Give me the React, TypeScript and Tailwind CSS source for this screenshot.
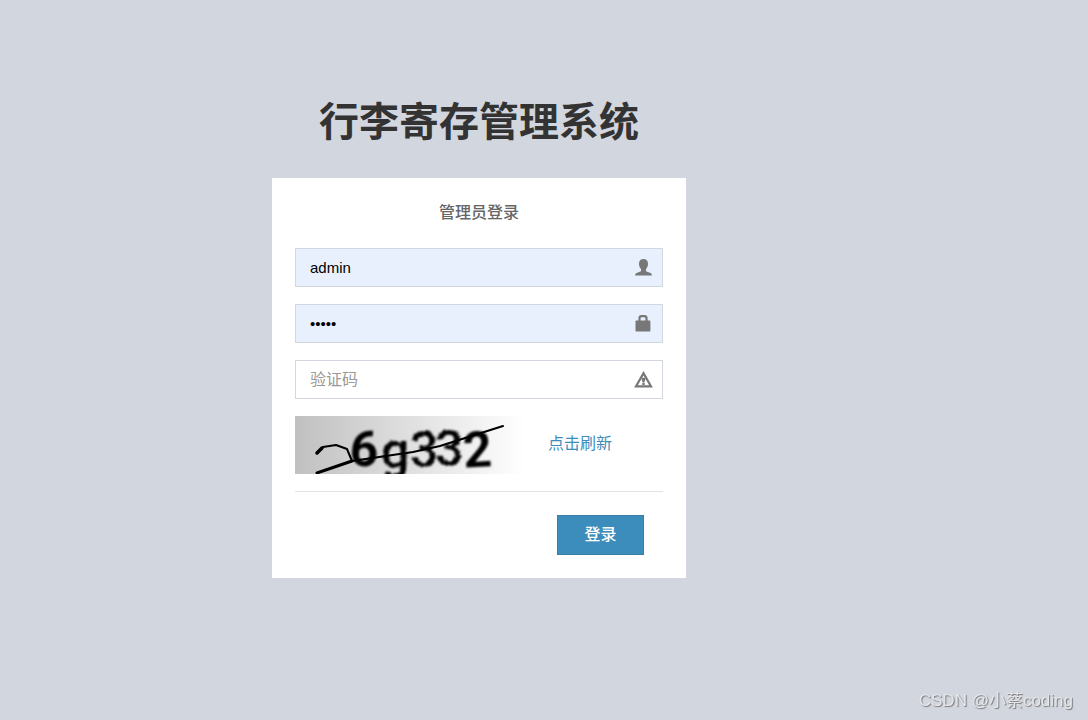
import { useState } from "react"
import type { InputHTMLAttributes, ReactNode } from "react"

interface FieldProps extends InputHTMLAttributes<HTMLInputElement> {
    label: string
    icon: ReactNode
}

function UserIcon() {
    return (
        <svg viewBox="0 0 18 18" className="size-[18px]" fill="currentColor" aria-hidden="true">
            <path d="M9.500 0C6.600 0 5 1.800 5 4.700c0 2.300.8 4.200 2 5.400v1.600c0 .4-.2.7-.6.9l-3.700 1.400c-1 .4-1.500 1.100-1.500 2v.6h16.600V16c0-.9-.4-1.600-1.400-2l-3.800-1.400c-.4-.2-.6-.5-.6-.9v-1.600c1.200-1.200 2-3.100 2-5.400C14 1.800 12.400 0 9.500 0z" />
        </svg>
    )
}

function LockIcon() {
    return (
        <svg viewBox="0 0 18 18" className="size-[18px]" fill="currentColor" aria-hidden="true">
            <path
                fillRule="evenodd"
                d="M7.400 0h3.200c1.800 0 3 1.200 3 2.900v2.700h1.800c.6 0 1 .4 1 1v8.900c0 .6-.5 1.100-1.100 1.100H2.600c-.6 0-1.100-.5-1.100-1.100V6.600c0-.6.4-1 1-1h1.900V2.900C4.400 1.200 5.600 0 7.400 0zM7.900 2.200c-.8 0-1.300.5-1.300 1.300v2.100h4.800V3.500c0-.8-.5-1.300-1.300-1.300z"
            />
        </svg>
    )
}

function WarningIcon() {
    return (
        <svg viewBox="0 0 20 18" className="h-[18px] w-5" fill="currentColor" aria-hidden="true">
            <path fillRule="evenodd" d="M10.500 0 19.900 16.500H1.100zM10.500 4.500 4.900 14.300h11.200z" />
            <path d="M8.300 6.800h4.400l-1.200 4.400h-2zM9.300 11.800h2.400v2.200H9.300z" />
        </svg>
    )
}

function Field({ label, icon, className = "", ...props }: FieldProps) {
    return (
        <div className="relative">
            <input
                {...props}
                aria-label={label}
                className={`block h-[39px] w-full border border-[#d2d6de] px-3.5 pr-11 text-black outline-none placeholder:text-[#999] focus:border-[#3c8dbc] ${className}`}
            />
            <span className="pointer-events-none absolute inset-y-0 right-0 flex w-10 items-center justify-center text-[#777]">
                {icon}
            </span>
        </div>
    )
}

function Captcha() {
    return (
        <svg viewBox="0 0 230 58" className="h-[58px] w-[230px] shrink-0" role="img" aria-label="验证码图片">
            <defs>
                <linearGradient id="captcha-bg" x1="0" y1="0" x2="1" y2="0">
                    <stop offset="0" stopColor="#c0c0c0" />
                    <stop offset="1" stopColor="#ffffff" />
                </linearGradient>
                <filter id="captcha-soft">
                    <feGaussianBlur stdDeviation="0.9" />
                </filter>
                {/* ragged edges on the middle characters */}
                <filter id="captcha-rough">
                    <feTurbulence type="fractalNoise" baseFrequency="0.35" numOctaves="1" seed="4" result="noise" />
                    <feDisplacementMap in="SourceGraphic" in2="noise" xChannelSelector="R" yChannelSelector="G" scale="4" />
                    <feGaussianBlur stdDeviation="0.9" />
                </filter>
            </defs>
            <rect width="230" height="58" fill="url(#captcha-bg)" />
            <g fontFamily="Roboto, sans-serif" fontWeight="700" fontSize="50" fill="#000">
                <g filter="url(#captcha-soft)">
                    <text x="55" y="50" transform="rotate(5 69 32)">6</text>
                    <text x="168" y="51" transform="rotate(-3 182 34)">2</text>
                </g>
                <g filter="url(#captcha-rough)" fontWeight="500">
                    <text x="86" y="52">g</text>
                    <text x="115" y="51">3</text>
                    <text x="140" y="50">3</text>
                </g>
            </g>
            <g fill="none" stroke="#000" strokeLinecap="round" strokeLinejoin="round">
                <path d="M22 57 57 45" strokeWidth="3" />
                <path d="M57 45 118 36 145 30 208 10" strokeWidth="2" />
                <path d="M22 37 28 31 41 29 52 33 57 45" strokeWidth="2" />
                <path d="M22 37 27 32" strokeWidth="3.500" />
            </g>
        </svg>
    )
}

export default function App() {
    const [username, setUsername] = useState("admin")
    const [password, setPassword] = useState("admin")
    const [code, setCode] = useState("")

    return (
        <div className="min-h-screen bg-[#d2d6de] pt-[92px] pr-[130px] font-['Liberation_Sans','Noto_Sans_CJK_SC',sans-serif] text-base">
            <main className="mx-auto w-full max-w-[414px]">
                <h1 className="mb-[26px] text-center text-[40px] leading-[60px] font-bold whitespace-nowrap text-[#333]">
                    行李寄存管理系统
                </h1>

                <div className="bg-white p-[23px]">
                    <p className="mb-[23px] text-center leading-6 font-medium text-[#666]">管理员登录</p>

                    <form onSubmit={(e) => e.preventDefault()}>
                        <div className="space-y-[17px]">
                            <Field
                                label="用户名"
                                icon={<UserIcon />}
                                value={username}
                                onChange={(e) => setUsername(e.target.value)}
                                className="bg-[#e8f0fe] text-[15px]"
                            />
                            <Field
                                label="密码"
                                type="password"
                                icon={<LockIcon />}
                                value={password}
                                onChange={(e) => setPassword(e.target.value)}
                                className="bg-[#e8f0fe] text-[15px]"
                            />
                            <Field
                                label="验证码"
                                placeholder="验证码"
                                icon={<WarningIcon />}
                                value={code}
                                onChange={(e) => setCode(e.target.value)}
                                className="bg-white text-base"
                            />
                            <div className="flex gap-[23px]">
                                <Captcha />
                                <a href="#" className="pt-4 leading-6 text-[#3c8dbc]">
                                    点击刷新
                                </a>
                            </div>
                        </div>

                        <hr className="mt-[17px] mb-[23px] border-[#e2e2e2]" />

                        <div className="flex justify-end pr-[19px]">
                            <button
                                type="submit"
                                className="h-10 w-[87px] border border-[#367fa9] bg-[#3c8dbc] font-medium text-white hover:bg-[#367fa9]"
                            >
                                登录
                            </button>
                        </div>
                    </form>
                </div>
            </main>

            <div className="fixed right-[15px] bottom-[5px] text-[17px] leading-7 text-[#e4e6ea] [text-shadow:1px_1px_1px_#777]">
                CSDN @小蔡coding
            </div>
        </div>
    )
}
